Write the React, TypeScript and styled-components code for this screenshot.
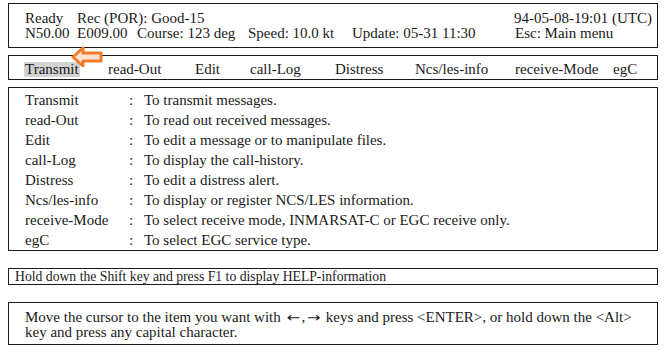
import React from "react";
import styled, { createGlobalStyle } from "styled-components";

const Global = createGlobalStyle`
  html, body { margin: 0; padding: 0; background: #fff; }
  body { font-family: "Liberation Serif", "Times New Roman", serif; color: #1a1a1a; }
`;

const Page = styled.div`
  position: relative;
  width: 667px;
  height: 350px;
  padding: 3px 0 0 8px;
  box-sizing: border-box;
`;

const Box = styled.div<{ $pt: number; $pb: number; $pl: number; $mt: number }>`
  width: 650px;
  box-sizing: border-box;
  border: 1px solid #1a1a1a;
  margin-top: ${(p) => p.$mt}px;
  padding: ${(p) => p.$pt}px 5px ${(p) => p.$pb}px ${(p) => p.$pl}px;
`;

const StatusRow = styled.div`
  display: flex;
  font-size: 15px;
  line-height: 15px;
  white-space: nowrap;
`;

const Cell = styled.span<{ $w?: number }>`
  flex: ${(p) => (p.$w ? `0 0 ${p.$w}px` : "1 1 auto")};
`;

const RightCell = styled.span`
  margin-left: auto;
`;

const MenuBar = styled.div`
  display: flex;
  font-size: 15px;
  line-height: 15px;
  white-space: nowrap;
`;

const MenuItem = styled.span<{ $w: number; $active?: boolean }>`
  flex: 0 0 ${(p) => p.$w}px;
  display: flex;
  & > span {
    display: inline-block;
    padding: 0 1px;
    margin-left: -1px;
    background: ${(p) => (p.$active ? "#d3d3d3" : "transparent")};
  }
`;

const HelpGrid = styled.div`
  display: grid;
  grid-template-columns: 103px 16px 1fr;
  font-size: 15px;
  line-height: 20px;
  white-space: nowrap;
`;

const Colon = styled.span`
  padding-left: 1px;
`;

const HintLine = styled.div`
  font-size: 13.7px;
  line-height: 15px;
  white-space: nowrap;
`;

const Para = styled.div`
  font-size: 15px;
  line-height: 14px;
  white-space: nowrap;
`;

const Glyph = styled.span`
  font-family: "DejaVu Sans", sans-serif;
  font-size: 13px;
  display: inline-block;
  transform: scaleX(1.25);
  margin: 0 3px;
`;

const Arrow = styled.svg`
  position: absolute;
  left: 70px;
  top: 45px;
`;

const menu = [
  { t: "Transmit", w: 83 },
  { t: "read-Out", w: 87 },
  { t: "Edit", w: 55 },
  { t: "call-Log", w: 85 },
  { t: "Distress", w: 80 },
  { t: "Ncs/les-info", w: 100 },
  { t: "receive-Mode", w: 98 },
  { t: "egC", w: 40 },
];

const help: [string, string][] = [
  ["Transmit", "To transmit messages."],
  ["read-Out", "To read out received messages."],
  ["Edit", "To edit a message or to manipulate files."],
  ["call-Log", "To display the call-history."],
  ["Distress", "To edit a distress alert."],
  ["Ncs/les-info", "To display or register NCS/LES information."],
  ["receive-Mode", "To select receive mode, INMARSAT-C or EGC receive only."],
  ["egC", "To select EGC service type."],
];

export default function App() {
  return (
    <>
      <Global />
      <Page>
        <Box $mt={0} $pt={7} $pb={6} $pl={16}>
          <StatusRow>
            <Cell $w={52}>Ready</Cell>
            <Cell $w={200}>Rec (POR): Good-15</Cell>
            <RightCell>94-05-08-19:01 (UTC)</RightCell>
          </StatusRow>
          <StatusRow>
            <Cell $w={52}>N50.00</Cell>
            <Cell $w={60}>E009.00</Cell>
            <Cell $w={111}>Course: 123 deg</Cell>
            <Cell $w={104}>Speed: 10.0 kt</Cell>
            <Cell $w={163}>Update: 05-31 11:30</Cell>
            <Cell>Esc: Main menu</Cell>
          </StatusRow>
        </Box>
        <Box $mt={7} $pt={6} $pb={2} $pl={16}>
          <MenuBar>
            {menu.map((m, i) => (
              <MenuItem key={m.t} $w={m.w} $active={i === 0}>
                <span>{m.t}</span>
              </MenuItem>
            ))}
          </MenuBar>
        </Box>
        <Box $mt={7} $pt={2} $pb={0} $pl={16}>
          <HelpGrid>
            {help.map(([k, d]) => (
              <React.Fragment key={k}>
                <span>{k}</span>
                <Colon>:</Colon>
                <span>{d}</span>
              </React.Fragment>
            ))}
          </HelpGrid>
        </Box>
        <Box $mt={17} $pt={0} $pb={0} $pl={6}>
          <HintLine>Hold down the Shift key and press F1 to display HELP-information</HintLine>
        </Box>
        <Box $mt={17} $pt={7} $pb={5} $pl={16}>
          <Para>
            Move the cursor to the item you want with <Glyph>←</Glyph>,<Glyph>→</Glyph> keys and press &lt;ENTER&gt;, or hold down the &lt;Alt&gt;
            <br />
            key and press any capital character.
          </Para>
        </Box>
        <Arrow width="34" height="22" viewBox="0 0 34 22">
          <polygon
            points="3,12 13,3 13,8 31,8 31,16 13,16 13,21"
            fill="#fbe3cf"
            stroke="#f07c2a"
            strokeWidth="3"
            strokeLinejoin="round"
          />
        </Arrow>
      </Page>
    </>
  );
}
